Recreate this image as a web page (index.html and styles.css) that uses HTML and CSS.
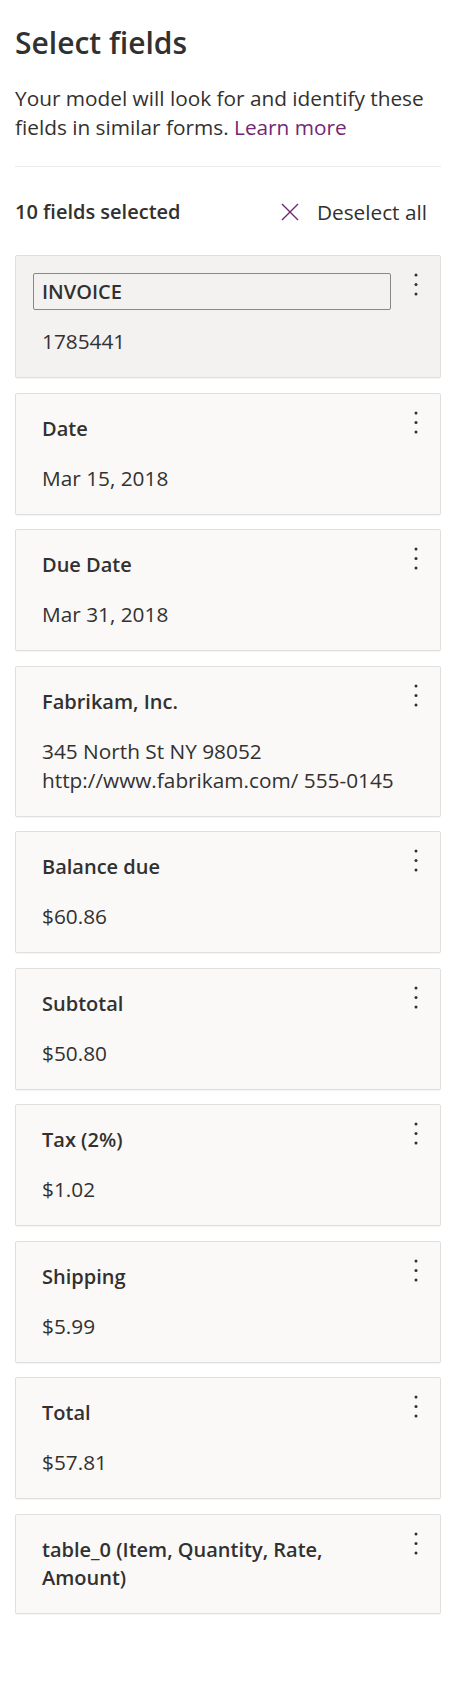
FILE: index.html
```html
<!DOCTYPE html>
<html lang="en">

<head>
	<meta charset="UTF-8">
	<meta name="viewport" content="width=device-width, initial-scale=1.0">
	<title>Select fields</title>
	<link rel="stylesheet" href="styles.css">
</head>

<body>
	<div class="panel">
		<h1 class="title">Select fields</h1>
		<p class="desc">Your model will look for and identify these fields in similar forms. <a href="#" class="link">Learn more</a></p>
		<hr class="divider">

		<!-- 选中数量 + 全部取消 -->
		<div class="summary">
			<span class="count">10 fields selected</span>
			<button class="deselect">
				<svg width="18" height="18" viewBox="0 0 18 18">
					<path d="M1 1 L17 17 M17 1 L1 17" stroke="#742774" stroke-width="1.4" fill="none" />
				</svg>
				<span>Deselect all</span>
			</button>
		</div>

		<!-- 字段列表 -->
		<div class="fields">
			<div class="field active">
				<div class="field-body">
					<input class="field-input" type="text" value="INVOICE">
					<div class="field-value">1785441</div>
				</div>
				<button class="more"><svg width="4" height="24" viewBox="0 0 4 24"><circle cx="2" cy="3" r="1.5" /><circle cx="2" cy="12.5" r="1.5" /><circle cx="2" cy="22" r="1.5" /></svg></button>
			</div>

			<div class="field">
				<div class="field-body">
					<div class="field-name">Date</div>
					<div class="field-value">Mar 15, 2018</div>
				</div>
				<button class="more"><svg width="4" height="24" viewBox="0 0 4 24"><circle cx="2" cy="3" r="1.5" /><circle cx="2" cy="12.5" r="1.5" /><circle cx="2" cy="22" r="1.5" /></svg></button>
			</div>

			<div class="field">
				<div class="field-body">
					<div class="field-name">Due Date</div>
					<div class="field-value">Mar 31, 2018</div>
				</div>
				<button class="more"><svg width="4" height="24" viewBox="0 0 4 24"><circle cx="2" cy="3" r="1.5" /><circle cx="2" cy="12.5" r="1.5" /><circle cx="2" cy="22" r="1.5" /></svg></button>
			</div>

			<div class="field">
				<div class="field-body">
					<div class="field-name">Fabrikam, Inc.</div>
					<div class="field-value">345 North St NY 98052<br>http://www.fabrikam.com/ 555-0145</div>
				</div>
				<button class="more"><svg width="4" height="24" viewBox="0 0 4 24"><circle cx="2" cy="3" r="1.5" /><circle cx="2" cy="12.5" r="1.5" /><circle cx="2" cy="22" r="1.5" /></svg></button>
			</div>

			<div class="field">
				<div class="field-body">
					<div class="field-name">Balance due</div>
					<div class="field-value">$60.86</div>
				</div>
				<button class="more"><svg width="4" height="24" viewBox="0 0 4 24"><circle cx="2" cy="3" r="1.5" /><circle cx="2" cy="12.5" r="1.5" /><circle cx="2" cy="22" r="1.5" /></svg></button>
			</div>

			<div class="field">
				<div class="field-body">
					<div class="field-name">Subtotal</div>
					<div class="field-value">$50.80</div>
				</div>
				<button class="more"><svg width="4" height="24" viewBox="0 0 4 24"><circle cx="2" cy="3" r="1.5" /><circle cx="2" cy="12.5" r="1.5" /><circle cx="2" cy="22" r="1.5" /></svg></button>
			</div>

			<div class="field">
				<div class="field-body">
					<div class="field-name">Tax (2%)</div>
					<div class="field-value">$1.02</div>
				</div>
				<button class="more"><svg width="4" height="24" viewBox="0 0 4 24"><circle cx="2" cy="3" r="1.5" /><circle cx="2" cy="12.5" r="1.5" /><circle cx="2" cy="22" r="1.5" /></svg></button>
			</div>

			<div class="field">
				<div class="field-body">
					<div class="field-name">Shipping</div>
					<div class="field-value">$5.99</div>
				</div>
				<button class="more"><svg width="4" height="24" viewBox="0 0 4 24"><circle cx="2" cy="3" r="1.5" /><circle cx="2" cy="12.5" r="1.5" /><circle cx="2" cy="22" r="1.5" /></svg></button>
			</div>

			<div class="field">
				<div class="field-body">
					<div class="field-name">Total</div>
					<div class="field-value">$57.81</div>
				</div>
				<button class="more"><svg width="4" height="24" viewBox="0 0 4 24"><circle cx="2" cy="3" r="1.5" /><circle cx="2" cy="12.5" r="1.5" /><circle cx="2" cy="22" r="1.5" /></svg></button>
			</div>

			<div class="field">
				<div class="field-body">
					<div class="field-name">table_0 (Item, Quantity, Rate, Amount)</div>
				</div>
				<button class="more"><svg width="4" height="24" viewBox="0 0 4 24"><circle cx="2" cy="3" r="1.5" /><circle cx="2" cy="12.5" r="1.5" /><circle cx="2" cy="22" r="1.5" /></svg></button>
			</div>
		</div>
	</div>
</body>

</html>
```

FILE: styles.css
```css
body {
	margin: 0;
	padding: 0;
	background: #fff;
	color: #323130;
	font-family: "Open Sans", "Noto Sans", sans-serif;
}

.panel {
	width: 426px;
	margin-left: 15px;
}

.title {
	font-size: 30px;
	line-height: 40px;
	font-weight: 600;
	margin: 23px 0 0;
}

.desc {
	font-size: 20.8px;
	line-height: 29px;
	margin: 21px 0 0;
}

.link {
	color: #742774;
	text-decoration: none;
}

.divider {
	border: none;
	border-top: 1px solid #edebe9;
	margin: 24px 0 0;
}

.summary {
	display: flex;
	justify-content: space-between;
	align-items: center;
	margin-top: 31px;
	height: 28px;
}

.count {
	font-size: 20px;
	line-height: 28px;
	font-weight: 600;
}

.deselect {
	display: flex;
	align-items: center;
	gap: 18px;
	padding: 0 14px 0 0;
	border: none;
	background: none;
	font-family: inherit;
	font-size: 20.8px;
	line-height: 28px;
	color: #323130;
	cursor: pointer;
}

.fields {
	margin-top: 29px;
}

.field {
	display: flex;
	background-color: #faf9f8;
	border: 1px solid #e1dfdd;
	border-radius: 2px;
	padding: 21px 8px 21px 26px;
	margin-bottom: 14.5px;
	box-shadow: 0 1px 1px rgba(0, 0, 0, 0.04);
}

.field.active {
	background-color: #f3f2f1;
}

.field-body {
	flex: 1;
}

.field-name {
	font-size: 20px;
	line-height: 28px;
	font-weight: 600;
}

.field-input {
	display: block;
	box-sizing: border-box;
	width: 100%;
	height: 37px;
	margin: -4px 0 0 -9px;
	padding: 0 8px;
	border: 1px solid #8a8886;
	border-radius: 2px;
	background: transparent;
	font-family: inherit;
	font-size: 20px;
	font-weight: 600;
	color: #323130;
}

.field-value {
	font-size: 20.8px;
	line-height: 29px;
	margin-top: 21px;
}

.field-input+.field-value {
	margin-top: 17px;
}

.more {
	width: 32px;
	height: 32px;
	margin-top: -9px;
	padding: 0;
	border: none;
	background: none;
	display: flex;
	justify-content: center;
	align-items: flex-start;
	cursor: pointer;
}

.more svg {
	fill: #323130;
	margin-top: 4px;
}
```
